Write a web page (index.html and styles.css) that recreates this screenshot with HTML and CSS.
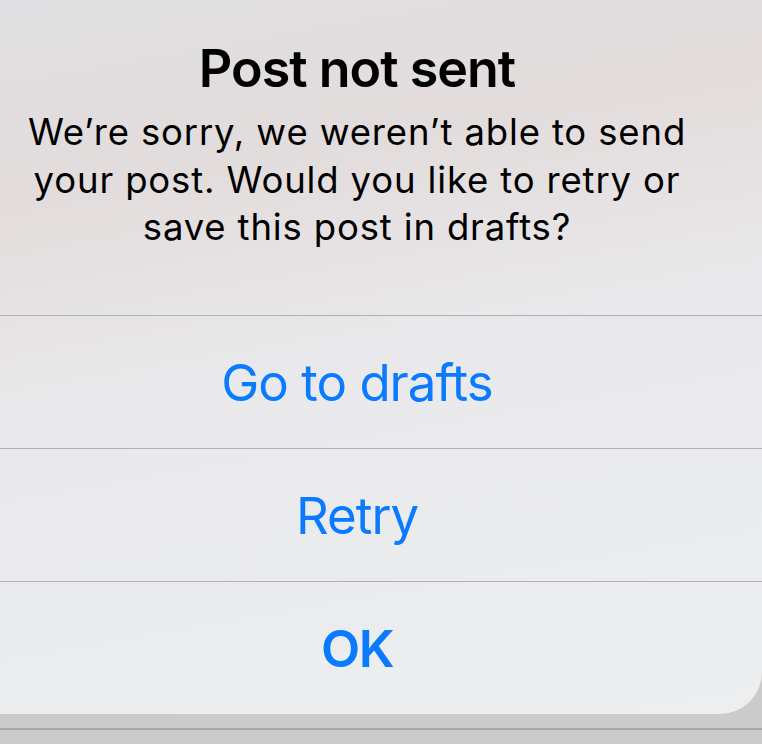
FILE: index.html
```html
<!DOCTYPE html>
<html lang="en">
<head>
<meta charset="UTF-8">
<meta name="viewport" content="width=device-width, initial-scale=1.0">
<title>Post not sent</title>
<link rel="stylesheet" href="styles.css">
</head>
<body>

  <div class="alert">
    <div class="alert-head">
      <h1 class="alert-title">Post not sent</h1>
      <p class="alert-message">We’re sorry, we weren’t able to send<br>your post. Would you like to retry or<br>save this post in drafts?</p>
    </div>
    <button class="alert-action">Go to drafts</button>
    <button class="alert-action">Retry</button>
    <button class="alert-action alert-action-bold">OK</button>
  </div>
  <div class="below"></div>

</body>
</html>
```

FILE: styles.css
```css
body { margin: 0; background-color: #cbcbcb; font-family: Inter, "Liberation Sans", sans-serif; overflow: hidden; }

/* the sheet runs off the left edge, so its centre sits at x=357 */
.alert {
  height: 714px;
  margin-left: -48px;
  display: flex;
  flex-direction: column;
  background: linear-gradient(170deg, #dfdfe1 0%, #e3dcdc 25%, #e9e9eb 50%, #eceef0 100%);
  border-bottom-right-radius: 42px;
  overflow: hidden;
}
.alert-head {
  height: 315px;
  box-sizing: border-box;
  padding-top: 39px;
  text-align: center;
  color: #000;
}
.alert-title {
  margin: 0;
  font-size: 52px;
  line-height: 60px;
  font-weight: 600;
  letter-spacing: -1px;
}
.alert-message {
  margin: 10px 0 0;
  font-size: 36.5px;
  line-height: 47.5px;
  font-weight: 400;
  letter-spacing: 0.85px;
}
.alert-action {
  flex: 1;
  border: 0;
  border-top: 1.5px solid #b0b0b2;
  background: transparent;
  color: #0a7bff;
  font-family: inherit;
  font-size: 51px;
  font-weight: 400;
  letter-spacing: -1px;
  padding: 0;
}
.alert-action-bold { font-weight: 600; letter-spacing: -1.5px; }

.below {
  height: 14px;
  border-bottom: 2px solid #a9a9a9;
}
```
